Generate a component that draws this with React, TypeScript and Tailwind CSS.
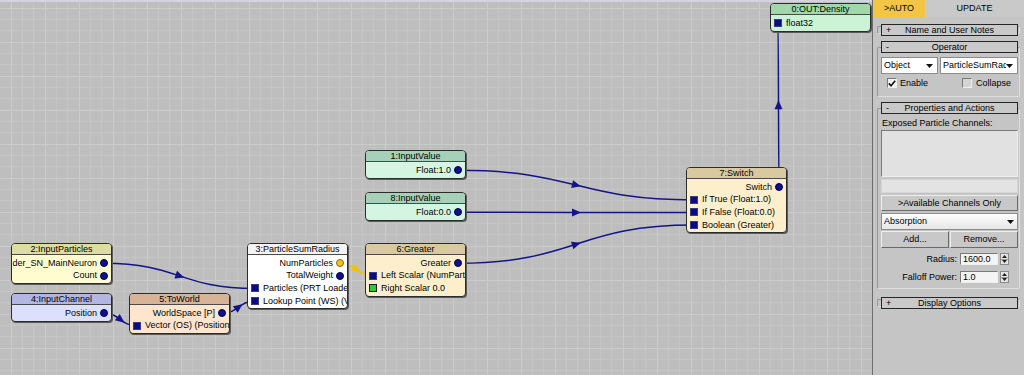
import React from 'react';

type Kind = 'out' | 'outY' | 'in' | 'inG';
type Row = { label: string; kind: Kind };
type GraphNode = {
  id: string;
  title: string;
  x: number;
  y: number;
  pos: string;
  head: string;
  body: string;
  rows: Row[];
};

// node rows: 12px header block, 2px pad, then 12.6px rows
const ROW_H = 12.6;

const NODES: GraphNode[] = [
  {
    id: 'out',
    title: '0:OUT:Density',
    x: 770,
    y: 1,
    pos: 'left-[770px] top-[1px]',
    head: 'bg-[#a2d8a9]',
    body: 'bg-[#cbf3d5]',
    rows: [{ label: 'float32', kind: 'in' }],
  },
  {
    id: 'iv1',
    title: '1:InputValue',
    x: 365,
    y: 148,
    pos: 'left-[365px] top-[148px]',
    head: 'bg-[#a6d0b8]',
    body: 'bg-[#d3f5e2]',
    rows: [{ label: 'Float:1.0', kind: 'out' }],
  },
  {
    id: 'iv8',
    title: '8:InputValue',
    x: 365,
    y: 190,
    pos: 'left-[365px] top-[190px]',
    head: 'bg-[#a6d0b8]',
    body: 'bg-[#d3f5e2]',
    rows: [{ label: 'Float:0.0', kind: 'out' }],
  },
  {
    id: 'sw',
    title: '7:Switch',
    x: 686,
    y: 165,
    pos: 'left-[686px] top-[165px]',
    head: 'bg-[#d9c9a0]',
    body: 'bg-[#fdefcb]',
    rows: [
      { label: 'Switch', kind: 'out' },
      { label: 'If True (Float:1.0)', kind: 'in' },
      { label: 'If False (Float:0.0)', kind: 'in' },
      { label: 'Boolean (Greater)', kind: 'in' },
    ],
  },
  {
    id: 'ip',
    title: '2:InputParticles',
    x: 11,
    y: 241,
    pos: 'left-[11px] top-[241px]',
    head: 'bg-[#dddca2]',
    body: 'bg-[#fffdd0]',
    rows: [
      { label: 'der_SN_MainNeuron', kind: 'out' },
      { label: 'Count', kind: 'out' },
    ],
  },
  {
    id: 'ic',
    title: '4:InputChannel',
    x: 11,
    y: 291,
    pos: 'left-[11px] top-[291px]',
    head: 'bg-[#b3b6e2]',
    body: 'bg-[#dde0fd]',
    rows: [{ label: 'Position', kind: 'out' }],
  },
  {
    id: 'tw',
    title: '5:ToWorld',
    x: 129,
    y: 291,
    pos: 'left-[129px] top-[291px]',
    head: 'bg-[#d8b396]',
    body: 'bg-[#fee5cd]',
    rows: [
      { label: 'WorldSpace [P]', kind: 'out' },
      { label: 'Vector (OS) (Position)', kind: 'in' },
    ],
  },
  {
    id: 'psr',
    title: '3:ParticleSumRadius',
    x: 247,
    y: 241,
    pos: 'left-[247px] top-[241px]',
    head: 'bg-[#f3f3f3]',
    body: 'bg-[#ffffff]',
    rows: [
      { label: 'NumParticles', kind: 'outY' },
      { label: 'TotalWeight', kind: 'out' },
      { label: 'Particles (PRT Loader)', kind: 'in' },
      { label: 'Lookup Point (WS) (Vector)', kind: 'in' },
    ],
  },
  {
    id: 'gt',
    title: '6:Greater',
    x: 365,
    y: 241,
    pos: 'left-[365px] top-[241px]',
    head: 'bg-[#d9c9a0]',
    body: 'bg-[#fdefcb]',
    rows: [
      { label: 'Greater', kind: 'out' },
      { label: 'Left Scalar (NumParticles)', kind: 'in' },
      { label: 'Right Scalar 0.0', kind: 'inG' },
    ],
  },
];

const WIRES: [string, number, string, number, string][] = [
  ['iv1', 0, 'sw', 1, '#14148a'],
  ['iv8', 0, 'sw', 2, '#14148a'],
  ['gt', 0, 'sw', 3, '#14148a'],
  ['sw', 0, 'out', 0, '#14148a'],
  ['ip', 0, 'psr', 2, '#14148a'],
  ['ic', 0, 'tw', 1, '#14148a'],
  ['tw', 0, 'psr', 3, '#14148a'],
  ['psr', 0, 'gt', 1, '#f2c200'],
];

const byId = (id: string) => NODES.find((n) => n.id === id)!;
const rowY = (n: GraphNode, i: number) => n.y + 20.3 + ROW_H * i;

function Wire({ from, fi, to, ti, color }: { from: string; fi: number; to: string; ti: number; color: string }) {
  const a = byId(from);
  const b = byId(to);
  const x1 = a.x + 93;
  const y1 = rowY(a, fi);
  const x2 = b.x + 8;
  const y2 = rowY(b, ti);
  const dx = (x2 - x1) / 2;
  const d = `M${x1},${y1} C${x1 + dx},${y1} ${x2 - dx},${y2} ${x2},${y2}`;
  // arrow at the curve's midpoint, pointing along the tangent
  const mx = (x1 + x2) / 2;
  const my = (y1 + y2) / 2;
  let tx = x2 - x1;
  let ty = 2 * (y2 - y1);
  const len = Math.hypot(tx, ty) || 1;
  tx /= len;
  ty /= len;
  const px = -ty;
  const py = tx;
  const tip = `${mx + tx * 5},${my + ty * 5}`;
  const l = `${mx - tx * 4 + px * 4},${my - ty * 4 + py * 4}`;
  const r = `${mx - tx * 4 - px * 4},${my - ty * 4 - py * 4}`;
  return (
    <g>
      <path d={d} fill="none" stroke={color} strokeWidth={1.5} />
      <polygon points={`${tip} ${l} ${r}`} fill={color} />
    </g>
  );
}

function Port({ kind }: { kind: Kind }) {
  if (kind === 'out') return <span className="h-[8px] w-[8px] shrink-0 rounded-full border border-[#000050] bg-[#101088]" />;
  if (kind === 'outY') return <span className="h-[8px] w-[8px] shrink-0 rounded-full border border-[#8a6a00] bg-[#f5c518]" />;
  if (kind === 'inG') return <span className="h-[8px] w-[8px] shrink-0 border border-[#1e1e1e] bg-[#27d02b]" />;
  return <span className="h-[8px] w-[8px] shrink-0 border border-[#3a3a8a] bg-[#0c0c80]" />;
}

function Node({ node }: { node: GraphNode }) {
  return (
    <div
      className={`absolute ${node.pos} w-[101px] overflow-hidden rounded-[4px] border border-[#2c2c2c] shadow-[1px_1px_0_#5a5a5a] ${node.body}`}
    >
      <div className={`flex h-[11px] items-center justify-center border-b border-[#4a4a4a] leading-none ${node.head}`}>
        {node.title}
      </div>
      <div className="pb-[1px] pt-[2px]">
        {node.rows.map((row) =>
          row.kind === 'out' || row.kind === 'outY' ? (
            <div key={row.label} className="flex h-[12.6px] items-center justify-end gap-[3px] overflow-hidden whitespace-nowrap pr-[3px] leading-none">
              <span>{row.label}</span>
              <Port kind={row.kind} />
            </div>
          ) : (
            <div key={row.label} className="flex h-[12.6px] items-center gap-[4px] overflow-hidden whitespace-nowrap pl-[3px] leading-none">
              <Port kind={row.kind} />
              <span>{row.label}</span>
            </div>
          ),
        )}
      </div>
    </div>
  );
}

function Caret() {
  return (
    <svg width="7" height="4" viewBox="0 0 7 4" className="shrink-0">
      <polygon points="0,0 7,0 3.5,4" fill="#111" />
    </svg>
  );
}

function Spinner() {
  return (
    <div className="ml-[2px] flex h-full w-[9px] flex-col border border-[#8a8a8a] bg-[#e4e4e4]">
      <div className="flex flex-1 items-center justify-center border-b border-[#9a9a9a]">
        <svg width="5" height="3" viewBox="0 0 5 3">
          <polygon points="0,3 5,3 2.5,0" fill="#222" />
        </svg>
      </div>
      <div className="flex flex-1 items-center justify-center">
        <svg width="5" height="3" viewBox="0 0 5 3">
          <polygon points="0,0 5,0 2.5,3" fill="#222" />
        </svg>
      </div>
    </div>
  );
}

function Rollout({ sign, title, open, className, children }: { sign: string; title: string; open?: boolean; className: string; children?: React.ReactNode }) {
  return (
    <div className={`relative mx-[4px] ${className}`}>
      <div
        className={`absolute inset-x-0 rounded-[2px] border border-[#959595] border-b-[#dedede] border-r-[#dedede] ${open ? 'bottom-0 top-[6px]' : 'bottom-[2px] top-[2px]'}`}
      />
      <div className="relative ml-[4px] mr-[2px] flex h-[12px] items-center border border-[#262626] bg-[#c9c9c9] leading-none">
        <span className="w-[14px] pl-[4px]">{sign}</span>
        <span className="flex-1 text-center">{title}</span>
        <span className="w-[14px]" />
      </div>
      {children && <div className="relative ml-[4px] mr-[2px]">{children}</div>}
    </div>
  );
}

const raised = 'border border-b-[#6a6a6a] border-l-[#efefef] border-r-[#6a6a6a] border-t-[#efefef] bg-[#c8c8c8]';
const sunken = 'border border-b-[#efefef] border-l-[#7a7a7a] border-r-[#efefef] border-t-[#7a7a7a]';

export default function App() {
  return (
    <div className="flex h-[375px] w-[1024px] overflow-hidden font-['Liberation_Sans',Arial,sans-serif] text-[9px] text-black">
      {/* Node graph canvas */}
      <div className="relative h-full w-[872px] overflow-hidden border-t-2 border-[#d3d3e0] bg-[#bdbdbd]">
        <svg width="872" height="375" className="absolute left-0 top-0">
          <defs>
            <pattern id="grid" width="34" height="34" patternUnits="userSpaceOnUse" patternTransform="translate(11,6)">
              <rect width="34" height="34" fill="#bebebe" />
              <path d="M11.33,0V34M22.67,0V34M0,11.33H34M0,22.67H34" stroke="#c5c5c5" strokeWidth="1" />
              <path d="M0.5,0V34M0,0.5H34" stroke="#cbcbcb" strokeWidth="1" />
            </pattern>
          </defs>
          <rect width="872" height="375" fill="url(#grid)" />
          {WIRES.map(([f, fi, t, ti, c]) => (
            <Wire key={`${f}-${t}-${ti}`} from={f} fi={fi} to={t} ti={ti} color={c} />
          ))}
        </svg>
        {NODES.map((n) => (
          <Node key={n.id} node={n} />
        ))}
      </div>

      {/* Command panel */}
      <div className="flex h-full w-[152px] flex-col border-l border-[#6e6e6e] bg-[#c5c5c5]">
        <div className="flex h-[17px]">
          <div className="flex w-[52px] items-center justify-center bg-[#f3c545] leading-none">&gt;AUTO</div>
          <div className="flex flex-1 items-center justify-center bg-[#c9c9c9] leading-none">UPDATE</div>
        </div>

        <Rollout sign="+" title="Name and User Notes" className="mt-[7px]" />

        <Rollout sign="-" title="Operator" open className="mt-[5px]">
          <div className="mt-[4px] flex h-[17px] gap-[2px]">
            <div className="flex w-[57px] items-center justify-between border border-[#8c8c8c] bg-white pl-[2px] pr-[4px] leading-none">
              <span>Object</span>
              <Caret />
            </div>
            <div className="flex min-w-0 flex-1 items-center justify-between border border-[#8c8c8c] bg-white pl-[2px] pr-[4px] leading-none">
              <span className="overflow-hidden whitespace-nowrap">ParticleSumRadius</span>
              <Caret />
            </div>
          </div>
          <div className="pb-[9px] pt-[4px]">
            <div className="flex h-[10px] items-center leading-none">
              <div className="ml-[6px] flex w-[75px] items-center gap-[3px]">
                <span className={`flex h-[10px] w-[10px] items-center justify-center bg-[#f2f2f2] ${sunken}`}>
                  <svg width="8" height="7" viewBox="0 0 8 7">
                    <path d="M0.8,3.4 L3,5.8 L7.2,0.8" fill="none" stroke="#111" strokeWidth="1.6" />
                  </svg>
                </span>
                <span>Enable</span>
              </div>
              <div className="flex items-center gap-[4px]">
                <span className={`h-[10px] w-[10px] bg-[#d4d4d4] ${sunken}`} />
                <span>Collapse</span>
              </div>
            </div>
          </div>
        </Rollout>

        <Rollout sign="-" title="Properties and Actions" open className="mt-[5px]">
          <div className="mt-[4px] flex h-[10px] items-center pl-[1px] leading-none">Exposed Particle Channels:</div>
          <div className={`mt-[2px] h-[47px] bg-[#e1e1e1] ${sunken}`} />
          <div className="mt-[2px] h-[14px] border border-[#d6d6d6] bg-[#e3e3e3]" />
          <div className={`mt-[2px] flex h-[16px] items-center justify-center leading-none ${raised}`}>&gt;Available Channels Only</div>
          <div className="mt-[2px] flex h-[17px] items-center justify-between border border-[#8c8c8c] bg-[linear-gradient(to_bottom,#ffffff,#e6e6e6)] pl-[2px] pr-[3px] leading-none">
            <span>Absorption</span>
            <Caret />
          </div>
          <div className="mt-[1px] flex h-[17px] gap-[1px]">
            <div className={`flex w-[68px] items-center justify-center leading-none ${raised}`}>Add...</div>
            <div className={`flex flex-1 items-center justify-center leading-none ${raised}`}>Remove...</div>
          </div>
          <div className="mt-[5px] flex h-[12px] items-center justify-end pr-[9px] leading-none">
            <span className="mr-[3px]">Radius:</span>
            <span className={`flex h-full w-[38px] items-center bg-[#f4f4f4] pl-[2px] ${sunken}`}>1600.0</span>
            <Spinner />
          </div>
          <div className="pb-[6px] pt-[6px]">
            <div className="flex h-[12px] items-center justify-end pr-[9px] leading-none">
              <span className="mr-[3px]">Falloff Power:</span>
              <span className={`flex h-full w-[38px] items-center bg-[#f4f4f4] pl-[2px] ${sunken}`}>1.0</span>
              <Spinner />
            </div>
          </div>
        </Rollout>

        <Rollout sign="+" title="Display Options" className="mt-[8px]" />
      </div>
    </div>
  );
}
